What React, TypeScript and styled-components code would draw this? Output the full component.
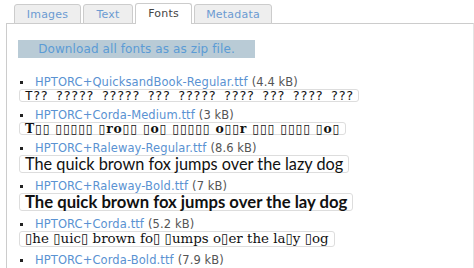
import React from "react";
import styled, { createGlobalStyle, css } from "styled-components";

const Global = createGlobalStyle`
  html, body { margin: 0; padding: 0; background: #ffffff; }
  body { font-family: "DejaVu Sans", Verdana, sans-serif; width: 474px; height: 268px; overflow: hidden; }
`;

const Page = styled.div`
  padding: 3px 0 0 6px;
`;

const TabBar = styled.div`
  display: flex;
  align-items: flex-end;
  gap: 2px;
  padding-left: 8px;
  margin-bottom: -1px;
  position: relative;
  z-index: 1;
`;

const Tab = styled.div<{ $active?: boolean; $w: number }>`
  box-sizing: border-box;
  height: ${(p) => (p.$active ? 21 : 20)}px;
  width: ${(p) => p.$w}px;
  border: 1px solid #cccccc;
  border-bottom: ${(p) => (p.$active ? "none" : "1px solid #cccccc")};
  border-radius: 3px 3px 0 0;
  background: ${(p) => (p.$active ? "#ffffff" : "#eeeeee")};
  color: ${(p) => (p.$active ? "#444444" : "#6b9bd2")};
  font-size: 11px;
  letter-spacing: 0.2px;
  line-height: 19px;
  text-align: center;
`;

const Panel = styled.div`
  border-top: 1px solid #cccccc;
  border-left: 1px solid #cccccc;
  border-right: 1px solid #e4e4e4;
  padding: 16px 0 0 11px;
  height: 260px;
  box-sizing: border-box;
`;

const DownloadButton = styled.div`
  width: 237px;
  height: 18px;
  background: #b9cbd6;
  color: #5b9bd5;
  font-size: 12px;
  letter-spacing: 0.1px;
  line-height: 18px;
  text-align: center;
`;

const FontList = styled.ul`
  list-style: none;
  margin: 18px 0 0 0;
  padding: 0;
  display: flex;
  flex-direction: column;
  gap: 7px;
`;

const Item = styled.li`
  display: flex;
  flex-direction: column;
  align-items: flex-start;
`;

const LinkRow = styled.div`
  display: flex;
  align-items: center;
  padding-left: 2px;
  height: 13px;
  font-size: 11.5px;
  letter-spacing: 0.1px;
  line-height: 13px;
  white-space: nowrap;
`;

const Bullet = styled.span`
  width: 3px;
  height: 3px;
  background: #222222;
  margin-right: 12px;
`;

const FontLink = styled.span`
  color: #5a92d2;
`;

const Size = styled.span`
  color: #555555;
  margin-left: 4px;
`;

type Kind = "quick" | "cordaMed" | "raleway" | "ralewayBold" | "corda";

const kindStyles: Record<Kind, ReturnType<typeof css>> = {
  quick: css`
    font-family: "DejaVu Sans Mono", monospace;
    font-size: 12.7px;
    line-height: 11px;
  `,
  cordaMed: css`
    font-family: "DejaVu Serif", serif;
    font-weight: bold;
    font-size: 12.4px;
    letter-spacing: 0.8px;
    line-height: 11px;
  `,
  raleway: css`
    font-family: Lato, sans-serif;
    font-size: 16.3px;
    line-height: 16px;
  `,
  ralewayBold: css`
    font-family: Lato, sans-serif;
    font-weight: bold;
    font-size: 16.7px;
    line-height: 16px;
  `,
  corda: css`
    font-family: "DejaVu Serif", serif;
    font-size: 13.4px;
    line-height: 14px;
  `,
};

const Sample = styled.div<{ $kind: Kind }>`
  border: 1px solid #dddddd;
  border-radius: 3px;
  padding: 0 5px;
  margin-left: 1px;
  color: #111111;
  white-space: nowrap;
  ${(p) => kindStyles[p.$kind]}
`;

const tabs = [
  { label: "Images", w: 67 },
  { label: "Text", w: 50 },
  { label: "Fonts", w: 57, active: true },
  { label: "Metadata", w: 78 },
];

const fonts: { name: string; size: string; sample: string; kind: Kind }[] = [
  {
    name: "HPTORC+QuicksandBook-Regular.ttf",
    size: "(4.4 kB)",
    sample: "T?? ????? ????? ??? ????? ???? ??? ???? ???",
    kind: "quick",
  },
  {
    name: "HPTORC+Corda-Medium.ttf",
    size: "(3 kB)",
    sample: "T▯▯ ▯▯▯▯▯ ▯ro▯▯ ▯o▯ ▯▯▯▯▯ o▯▯r ▯▯▯ ▯▯▯▯ ▯o▯",
    kind: "cordaMed",
  },
  {
    name: "HPTORC+Raleway-Regular.ttf",
    size: "(8.6 kB)",
    sample: "The quick brown fox jumps over the lazy dog",
    kind: "raleway",
  },
  {
    name: "HPTORC+Raleway-Bold.ttf",
    size: "(7 kB)",
    sample: "The quick brown fox jumps over the lay dog",
    kind: "ralewayBold",
  },
  {
    name: "HPTORC+Corda.ttf",
    size: "(5.2 kB)",
    sample: "▯he ▯uic▯ brown fo▯ ▯umps o▯er the la▯y ▯og",
    kind: "corda",
  },
  {
    name: "HPTORC+Corda-Bold.ttf",
    size: "(7.9 kB)",
    sample: "",
    kind: "corda",
  },
];

export default function App() {
  return (
    <>
      <Global />
      <Page>
        <TabBar>
          {tabs.map((t) => (
            <Tab key={t.label} $active={t.active} $w={t.w}>
              {t.label}
            </Tab>
          ))}
        </TabBar>
        <Panel>
          <DownloadButton>Download all fonts as as zip file.</DownloadButton>
          <FontList>
            {fonts.map((f) => (
              <Item key={f.name}>
                <LinkRow>
                  <Bullet />
                  <FontLink>{f.name}</FontLink>
                  <Size>{f.size}</Size>
                </LinkRow>
                {f.sample && <Sample $kind={f.kind}>{f.sample}</Sample>}
              </Item>
            ))}
          </FontList>
        </Panel>
      </Page>
    </>
  );
}
